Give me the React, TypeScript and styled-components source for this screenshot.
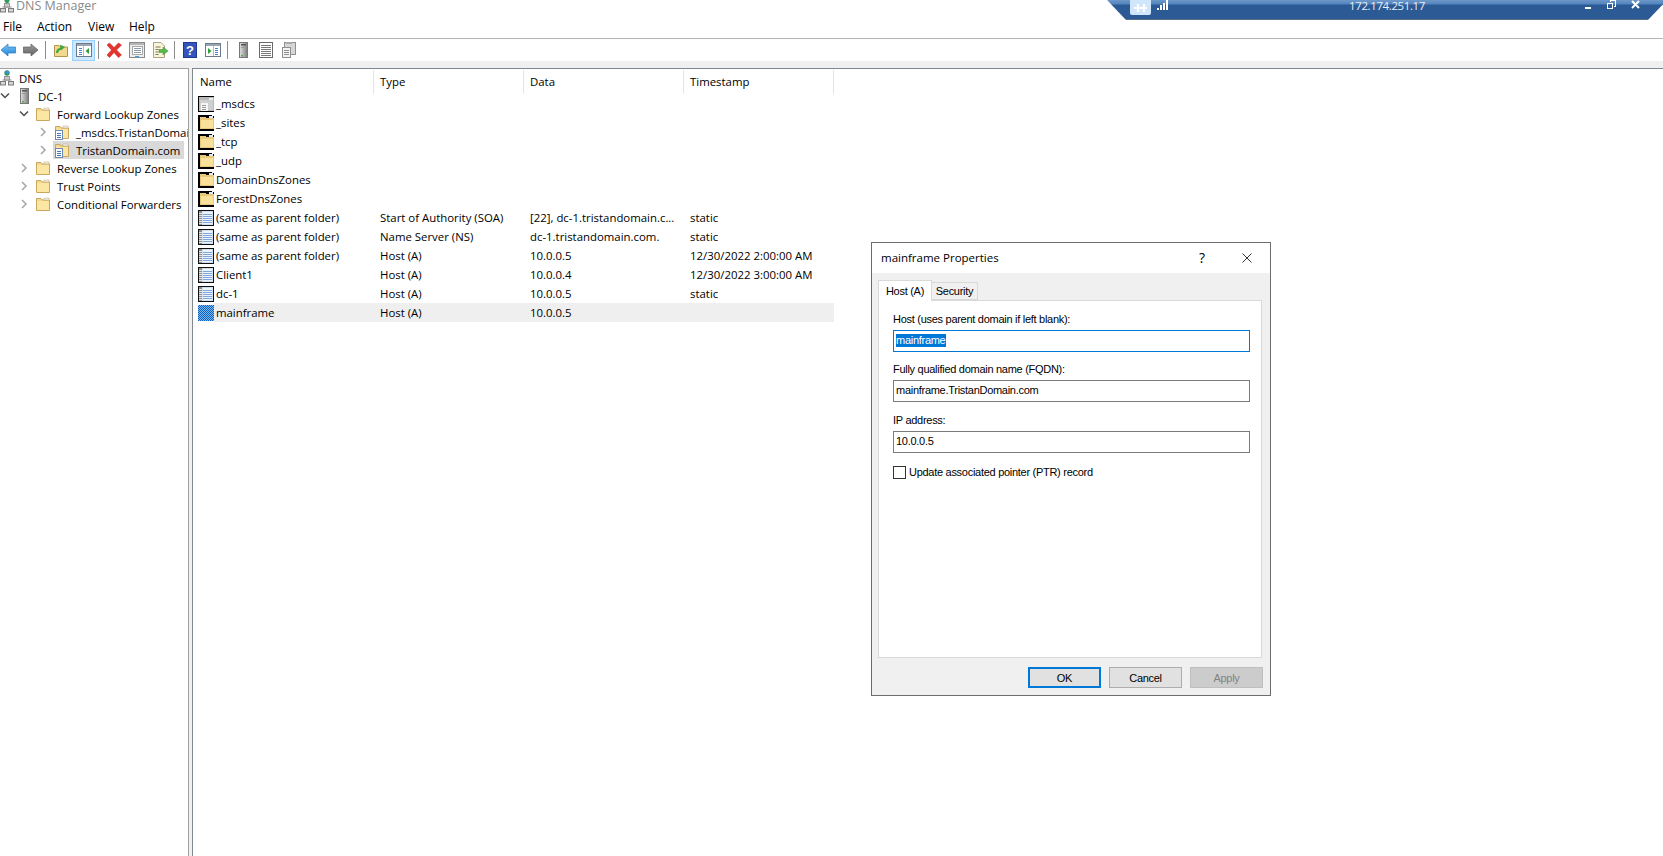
import React from "react";
import styled, { createGlobalStyle } from "styled-components";

const GlobalStyle = createGlobalStyle`
  html, body {
    margin: 0;
    padding: 0;
    height: 100%;
    background: #fff;
    overflow: hidden;
  }
  #root { height: 100%; }
  * { box-sizing: border-box; }
`;

const uiFont = `"Open Sans", "Noto Sans", sans-serif`;
const dlgFont = `"Liberation Sans", Arial, sans-serif`;

const Window = styled.div`
  position: relative;
  display: flex;
  flex-direction: column;
  width: 1663px;
  height: 856px;
  overflow: hidden;
  background: #fff;
  font-family: ${uiFont};
  font-size: 11.4px;
  color: #000;
`;

const TitleRow = styled.div`
  height: 16px;
  display: flex;
  align-items: flex-start;
  overflow: hidden;
  color: #8a8a8a;
  & > svg { margin-top: -3px; flex: none; }
  & > span { margin: -3px 0 0 1px; font-size: 12.5px; line-height: 18px; }
`;

const MenuBar = styled.div`
  height: 23px;
  display: flex;
  align-items: center;
  border-bottom: 1px solid #b4b4b4;
  padding-bottom: 1px;
  font-size: 12px;
`;

const MenuItem = styled.span<{ $w: number }>`
  width: ${p => p.$w}px;
  padding-left: 3px;
`;

const Toolbar = styled.div`
  height: 22px;
  display: flex;
  align-items: center;
  margin-left: -4px;
  flex: none;
`;

const ToolButton = styled.div<{ $active?: boolean }>`
  width: 23px;
  height: 21px;
  display: flex;
  align-items: center;
  justify-content: center;
  background: ${p => (p.$active ? "#cce8ff" : "transparent")};
  border: 1px solid ${p => (p.$active ? "#99d1ff" : "transparent")};
`;

const ToolSep = styled.div`
  width: 7px;
  height: 18px;
  display: flex;
  justify-content: center;
  &::before {
    content: "";
    width: 1px;
    background: #8c8c8c;
  }
`;

const Panes = styled.div`
  flex: 1;
  display: flex;
  gap: 3px;
  padding-top: 7px;
  background: #f0f0f0;
  min-height: 0;
`;

const TreePane = styled.div`
  width: 189px;
  background: #fff;
  border-top: 1px solid #a0a0a0;
  border-right: 1px solid #a0a0a0;
  overflow: hidden;
`;

const TreeRow = styled.div<{ $indent: number }>`
  height: 18px;
  display: flex;
  align-items: center;
  white-space: nowrap;
  padding-left: ${p => p.$indent}px;
`;

const Chevron = styled.div`
  width: 10px;
  height: 18px;
  margin-right: 5px;
  flex: none;
  display: flex;
  align-items: center;
  justify-content: center;
`;

const TreeItem = styled.div<{ $selected?: boolean }>`
  display: flex;
  align-items: center;
  height: 18px;
  padding: 0 4px 0 1px;
  background: ${p => (p.$selected ? "#d9d9d9" : "transparent")};
  & > span { margin-left: 6px; }
`;

const RootItem = styled.div`
  display: flex;
  align-items: center;
  height: 18px;
  & > span { margin-left: 4px; }
`;

const ListPane = styled.div`
  flex: 1;
  background: #fff;
  border-top: 1px solid #808890;
  border-left: 1px solid #808890;
  overflow: hidden;
`;

const HeaderRow = styled.div`
  height: 25px;
  display: flex;
  padding-top: 1px;
`;

const HeaderCell = styled.div<{ $w: number; $pad: number }>`
  width: ${p => p.$w}px;
  padding-left: ${p => p.$pad}px;
  border-right: 1px solid #e5e5e5;
  display: flex;
  align-items: center;
  padding-bottom: 1px;
`;

const Row = styled.div`
  height: 19px;
  display: flex;
  align-items: center;
  padding-left: 5px;
  white-space: nowrap;
`;

const RowCells = styled.div<{ $selected?: boolean }>`
  display: flex;
  align-items: center;
  height: 19px;
  background: ${p => (p.$selected ? "#efefef" : "transparent")};
`;

const Cell = styled.div<{ $w: number; $pad: number }>`
  width: ${p => p.$w}px;
  padding-left: ${p => p.$pad}px;
  overflow: hidden;
`;

/* RDP connection bar over the top of the window */
const ConnectionBar = styled.div`
  position: absolute;
  top: 0;
  left: 1107px;
  width: 560px;
  height: 20px;
  display: flex;
  align-items: flex-start;
  clip-path: polygon(0 0, 100% 0, 541px 100%, 19px 100%);
  background: linear-gradient(#6c98c9 0, #5485bd 4px, #2b5a95 5px, #2b5a95 19px, #5d6f86 19px);
  color: #fff;
  padding-left: 23px;
`;

const PinButton = styled.div`
  width: 21px;
  height: 15px;
  background: #cfe6fb;
  border-radius: 0 0 2px 2px;
  display: flex;
  align-items: center;
  justify-content: center;
  margin-right: 6px;
  flex: none;
`;

const SignalBars = styled.div`
  display: flex;
  align-items: flex-end;
  gap: 1px;
  height: 10px;
  width: 12px;
  flex: none;
`;

const SignalBar = styled.div<{ $h: number }>`
  width: 2px;
  height: ${p => p.$h}px;
  background: #fff;
`;

const HostName = styled.div`
  flex: 1;
  text-align: center;
  font-size: 11.5px;
  letter-spacing: -0.4px;
  line-height: 12px;
  padding-left: 21px;
  color: #e8eef6;
`;

const BarControls = styled.div`
  display: flex;
  align-items: flex-start;
  gap: 15px;
  margin-right: 27px;
  flex: none;
  height: 12px;
`;

/* properties dialog floating over the console */
const Dialog = styled.div`
  position: absolute;
  left: 871px;
  top: 242px;
  width: 400px;
  height: 454px;
  border: 1px solid #6d6d6d;
  background: #f0f0f0;
  display: flex;
  flex-direction: column;
  font-family: ${dlgFont};
  font-size: 11px;
  letter-spacing: -0.28px;
`;

const DialogTitle = styled.div`
  height: 30px;
  background: #fff;
  display: flex;
  align-items: center;
  padding: 0 0 1px 9px;
  font-family: ${uiFont};
  font-size: 11.5px;
  letter-spacing: 0;
  flex: none;
`;

const TitleText = styled.div`
  flex: 1;
`;

const HelpMark = styled.div`
  width: 10px;
  text-align: center;
  font-size: 14px;
  margin-right: 35px;
`;

const CloseMark = styled.div`
  width: 10px;
  height: 10px;
  margin-right: 18px;
  display: flex;
`;

const DialogBody = styled.div`
  flex: 1;
  display: flex;
  flex-direction: column;
  padding: 7px 7px 7px 6px;
  min-height: 0;
`;

const Tabs = styled.div`
  display: flex;
  align-items: flex-end;
  height: 20px;
  flex: none;
`;

const Tab = styled.div<{ $active?: boolean }>`
  position: relative;
  z-index: ${p => (p.$active ? 1 : 0)};
  display: flex;
  align-items: center;
  justify-content: center;
  width: ${p => (p.$active ? 54 : 46)}px;
  height: ${p => (p.$active ? 21 : 18)}px;
  margin-bottom: ${p => (p.$active ? -1 : 0)}px;
  background: ${p => (p.$active ? "#fff" : "#f0f0f0")};
  border: 1px solid #d9d9d9;
  border-bottom: ${p => (p.$active ? "none" : "1px solid #d9d9d9")};
  border-left: ${p => (p.$active ? "1px solid #d9d9d9" : "none")};
`;

const TabPanel = styled.div`
  height: 358px;
  width: 384px;
  flex: none;
  background: #fff;
  border: 1px solid #d9d9d9;
  padding: 11px 11px 0 14px;
  display: flex;
  flex-direction: column;
  gap: 10px;
`;

const FieldGroup = styled.div`
  display: flex;
  flex-direction: column;
  &:nth-child(3) { margin-top: 1px; }
`;

const FieldLabel = styled.div`
  height: 16px;
  line-height: 15px;
  margin-bottom: 2px;
  white-space: nowrap;
`;

const FieldBox = styled.div<{ $focused?: boolean }>`
  height: 22px;
  width: 357px;
  border: 1px solid ${p => (p.$focused ? "#0078d7" : "#7a7a7a")};
  display: flex;
  align-items: center;
  padding: 0 0 2px 2px;
  background: #fff;
`;

const SelectedText = styled.span`
  background: #0078d7;
  color: #fff;
  line-height: 13px;
  padding-right: 1px;
`;

const CheckRow = styled.div`
  display: flex;
  align-items: center;
  height: 13px;
  margin-top: 3px;
  white-space: nowrap;
`;

const CheckLabel = styled.span`
  margin-top: -2px;
`;

const CheckBox = styled.div`
  width: 13px;
  height: 13px;
  border: 1px solid #333;
  background: #fff;
  margin-right: 3px;
  flex: none;
`;

const ButtonRow = styled.div`
  display: flex;
  justify-content: flex-end;
  gap: 8px;
  margin-top: 9px;
  height: 21px;
  flex: none;
`;

const DlgButton = styled.div<{ $kind?: "default" | "disabled" }>`
  width: 73px;
  height: 21px;
  display: flex;
  align-items: center;
  justify-content: center;
  background: ${p => (p.$kind === "disabled" ? "#cccccc" : "#e1e1e1")};
  color: ${p => (p.$kind === "disabled" ? "#838383" : "#000")};
  border: ${p =>
    p.$kind === "default"
      ? "2px solid #0078d7"
      : p.$kind === "disabled"
      ? "1px solid #bfbfbf"
      : "1px solid #adadad"};
`;

/* ---------- icons ---------- */

const ChevronDown = () => (
  <svg width="10" height="8" viewBox="0 0 10 8">
    <path d="M1 1.5 L5 5.5 L9 1.5" fill="none" stroke="#4d4d4d" strokeWidth="1.5" />
  </svg>
);

const ChevronRight = () => (
  <svg width="8" height="10" viewBox="0 0 8 10">
    <path d="M2 1 L6 5 L2 9" fill="none" stroke="#a6a6a6" strokeWidth="1.5" />
  </svg>
);

const FolderShape = () => (
  <>
    <path d="M1.5 2.5 H6 L7 4 H14.5 V14.5 H1.5 Z" fill="#f4d88f" stroke="#c9a85e" />
    <rect x="2" y="5" width="12" height="9" fill="#fbe6a4" />
    <rect x="9" y="2" width="5" height="2" fill="#e9f1f8" stroke="#c9a85e" strokeWidth="0.5" />
  </>
);

const TreeFolder = () => (
  <svg width="16" height="16" viewBox="0 0 16 16">
    <FolderShape />
  </svg>
);

const ZoneFolder = () => (
  <svg width="16" height="16" viewBox="0 0 16 16">
    <FolderShape />
    <rect x="1.5" y="6.5" width="7" height="9" fill="#fff" stroke="#6f87a8" />
    <path d="M3 9.5h4M3 11.5h4M3 13.5h4" stroke="#3f78b8" strokeWidth="1" />
  </svg>
);

const DnsIcon = () => (
  <svg width="15" height="16" viewBox="0 0 15 16">
    <circle cx="7" cy="3" r="2.7" fill="#2f9a5a" />
    <path d="M5 1.5 A2.7 2.7 0 0 1 9.5 2.5 L7 4.5 Z" fill="#3f8fe0" />
    <path d="M7 6 V10 M2.5 10 H11.5" stroke="#8a8a8a" fill="none" />
    <rect x="4.5" y="6.5" width="5" height="3.5" fill="#c9c9c9" stroke="#7a7a7a" strokeWidth="0.7" />
    <rect x="0.5" y="11.5" width="5" height="3.5" fill="#d5d5d5" stroke="#7a7a7a" />
    <rect x="8.5" y="11.5" width="5" height="3.5" fill="#d5d5d5" stroke="#7a7a7a" />
  </svg>
);

const ServerShape = () => (
  <>
    <defs>
      <linearGradient id="srv" x1="0" x2="1" y1="0" y2="0">
        <stop offset="0" stopColor="#e2e2e2" />
        <stop offset="1" stopColor="#7d7d7d" />
      </linearGradient>
    </defs>
    <rect x="4.5" y="0.5" width="8" height="15" fill="url(#srv)" stroke="#777" />
    <rect x="6" y="2" width="5" height="1.5" fill="#555" />
    <rect x="6" y="5" width="5" height="1" fill="#999" />
    <rect x="6" y="13" width="2" height="1.5" fill="#4caf50" />
  </>
);

const ServerIcon = () => (
  <svg width="16" height="16" viewBox="0 0 16 16">
    <ServerShape />
  </svg>
);

const ListFolder = () => (
  <svg width="16" height="16" viewBox="0 0 16 16" shapeRendering="crispEdges">
    <rect width="16" height="16" fill="#000" />
    <rect x="14" width="2" height="1" fill="#fff" />
    <path d="M2 2 H7 L8 3 H16 V14 H2 Z" fill="#e9c878" />
    <rect x="3" y="5" width="12" height="8" fill="#f9e19c" />
    <rect x="11" y="1" width="4" height="2" fill="#dfeaf5" />
  </svg>
);

const ListGrayZone = () => (
  <svg width="16" height="16" viewBox="0 0 16 16" shapeRendering="crispEdges">
    <rect width="16" height="16" fill="#000" />
    <rect x="1" y="1" width="15" height="14" fill="#b9b9b9" />
    <rect x="2" y="4" width="13" height="10" fill="#cfcfcf" />
    <rect x="11" y="2" width="4" height="2" fill="#ececec" />
    <rect x="3" y="7" width="7" height="8" fill="#f7f7f7" />
    <path d="M4 9.5h4M4 11.5h4M4 13.5h4" stroke="#9a9a9a" />
  </svg>
);

const ListRecord = () => (
  <svg width="16" height="16" viewBox="0 0 16 16" shapeRendering="crispEdges">
    <rect width="16" height="16" fill="#111" />
    <rect x="1" y="1" width="14" height="14" fill="#d3dfee" />
    <rect x="1" y="1" width="3" height="14" fill="#8f8f8f" />
    <path d="M1 3h3M1 5h3M1 7h3M1 9h3M1 11h3M1 13h3" stroke="#e4e4e4" />
    <rect x="5" y="2" width="9" height="12" fill="#eef4fb" />
    <path d="M5 4h9M5 6h9M5 8h9M5 10h9M5 12h9" stroke="#7ea6dc" />
  </svg>
);

const ListRecordSelected = () => (
  <svg width="16" height="16" viewBox="0 0 16 16" shapeRendering="crispEdges">
    <defs>
      <pattern id="dither" width="2" height="2" patternUnits="userSpaceOnUse">
        <rect width="2" height="2" fill="#0a62c4" />
        <rect width="1" height="1" fill="#7fb6ef" />
        <rect x="1" y="1" width="1" height="1" fill="#7fb6ef" />
      </pattern>
    </defs>
    <rect width="16" height="16" fill="url(#dither)" />
  </svg>
);

const BackIcon = () => (
  <svg width="16" height="16" viewBox="0 0 16 16">
    <defs>
      <linearGradient id="bk" x1="0" x2="0" y1="0" y2="1">
        <stop offset="0" stopColor="#7cc3f5" />
        <stop offset="1" stopColor="#1e86d8" />
      </linearGradient>
    </defs>
    <path d="M1 8 L8 2 V5 H15.5 V11 H8 V14 Z" fill="url(#bk)" stroke="#2a78bd" strokeWidth="0.7" />
  </svg>
);

const ForwardIcon = () => (
  <svg width="16" height="16" viewBox="0 0 16 16">
    <defs>
      <linearGradient id="fw" x1="0" x2="0" y1="0" y2="1">
        <stop offset="0" stopColor="#a0a0a0" />
        <stop offset="1" stopColor="#606060" />
      </linearGradient>
    </defs>
    <path d="M15 8 L8 2 V5 H0.5 V11 H8 V14 Z" fill="url(#fw)" stroke="#5c5c5c" strokeWidth="0.7" />
  </svg>
);

const UpFolderIcon = () => (
  <svg width="16" height="16" viewBox="0 0 16 16">
    <path d="M1.5 3.5 H6 L7 5 H14.5 V14.5 H1.5 Z" fill="#f3d88f" stroke="#b4954f" />
    <path d="M4 11 C4 7 7 7 9 6" fill="none" stroke="#3fa83f" strokeWidth="2" />
    <path d="M7 2.5 L12 5 L8 8.5 Z" fill="#3fa83f" />
  </svg>
);

const ShowPaneIcon = () => (
  <svg width="16" height="14" viewBox="0 0 16 14" shapeRendering="crispEdges">
    <rect x="0.5" y="0.5" width="15" height="13" fill="#fff" stroke="#6c7b8a" />
    <rect x="1" y="1" width="14" height="2" fill="#9aa6b2" />
    <path d="M3 5h3M3 7h3M3 9h3M3 11h3" stroke="#4a86c5" />
    <path d="M7.5 3v10" stroke="#b5bcc4" />
    <path d="M13 5 L9.5 8 L13 11 Z" fill="#2f9e3a" shapeRendering="auto" />
  </svg>
);

const DeleteIcon = () => (
  <svg width="16" height="16" viewBox="0 0 16 16">
    <path
      d="M1 3 L3.5 1 L8 5.5 L12.5 1 L15.5 3 L10.5 8 L15.5 13 L12.5 15.5 L8 10.5 L3.5 15.5 L1 13 L5.5 8 Z"
      fill="#e5332e"
      stroke="#b8211d"
      strokeWidth="0.5"
    />
  </svg>
);

const PropertiesIcon = () => (
  <svg width="16" height="16" viewBox="0 0 16 16" shapeRendering="crispEdges">
    <rect x="0.5" y="0.5" width="15" height="15" fill="#ededed" stroke="#8a8a8a" />
    <rect x="1" y="1" width="14" height="2" fill="#b5b5b5" />
    <rect x="3" y="4" width="10" height="8" fill="#fff" stroke="#a8a8a8" />
    <path d="M5 6h7M5 8h7M5 10h7" stroke="#8c9aaa" />
    <rect x="6" y="14" width="4" height="1" fill="#3f9fe0" />
  </svg>
);

const ExportIcon = () => (
  <svg width="16" height="16" viewBox="0 0 16 16">
    <path d="M1.5 0.5 H9 L12.5 4 V15.5 H1.5 Z" fill="#fbf5d8" stroke="#a8a38a" />
    <path d="M3.5 5h5M3.5 7.5h3M3.5 10h3M3.5 12.5h3" stroke="#77746a" />
    <path d="M7 7.5 H11 V5 L16 9 L11 13 V10.5 H7 Z" fill="#58b848" stroke="#3b8f33" strokeWidth="0.5" />
  </svg>
);

const HelpIcon = () => (
  <svg width="14" height="16" viewBox="0 0 14 16">
    <rect width="14" height="16" fill="#1f3a96" />
    <rect x="1" y="1" width="12" height="14" fill="#3454b8" />
    <text x="7" y="13" textAnchor="middle" fontFamily="Liberation Sans, sans-serif" fontWeight="700" fontSize="13" fill="#fff">?</text>
  </svg>
);

const ActionPaneIcon = () => (
  <svg width="16" height="14" viewBox="0 0 16 14" shapeRendering="crispEdges">
    <rect x="0.5" y="0.5" width="15" height="13" fill="#fff" stroke="#6c7b8a" />
    <rect x="1" y="1" width="14" height="2" fill="#9aa6b2" />
    <path d="M10 5h3M10 7h3M10 9h3M10 11h3" stroke="#4a86c5" />
    <path d="M8.5 3v10" stroke="#b5bcc4" />
    <path d="M3 5 L6.5 8 L3 11 Z" fill="#2f9e3a" shapeRendering="auto" />
  </svg>
);

const RulesIcon = () => (
  <svg width="16" height="16" viewBox="0 0 16 16" shapeRendering="crispEdges">
    <rect x="1.5" y="0.5" width="13" height="15" fill="#fff" stroke="#6a6a6a" />
    <path d="M3 3h10M3 5h10M3 7h10M3 9h10M3 11h10M3 13h10" stroke="#777" />
  </svg>
);

const CopyIcon = () => (
  <svg width="16" height="16" viewBox="0 0 16 16" shapeRendering="crispEdges">
    <rect x="3.5" y="0.5" width="11" height="12" fill="#d6d6d6" stroke="#8f8f8f" />
    <rect x="5" y="0" width="6" height="2" fill="#a9a9a9" />
    <rect x="1.5" y="5.5" width="8" height="10" fill="#f2f2f2" stroke="#8f8f8f" />
    <path d="M3 8h5M3 10h5M3 12h5" stroke="#8f8f8f" />
  </svg>
);

const TitleIcon = () => (
  <svg width="15" height="16" viewBox="0 0 15 16">
    <path d="M7 4 V10 M2.5 10 H11.5" stroke="#8a8a8a" fill="none" />
    <rect x="4.5" y="6.5" width="5" height="3.5" fill="#c9c9c9" stroke="#7a7a7a" strokeWidth="0.7" />
    <rect x="0.5" y="11.5" width="5" height="3.5" fill="#d5d5d5" stroke="#7a7a7a" />
    <rect x="8.5" y="11.5" width="5" height="3.5" fill="#d5d5d5" stroke="#7a7a7a" />
    <circle cx="7" cy="3.5" r="2.5" fill="#2f9a5a" />
  </svg>
);

const PinIcon = () => (
  <svg width="13" height="10" viewBox="0 0 13 10" shapeRendering="crispEdges">
    <rect x="0" y="4" width="13" height="2" fill="#fff" />
    <rect x="3" y="1" width="2" height="8" fill="#fff" />
    <rect x="9" y="1" width="2" height="8" fill="#fff" />
  </svg>
);

const BarMinimize = () => (
  <svg width="8" height="10" viewBox="0 0 8 10">
    <rect x="1" y="7" width="6" height="2" fill="#fff" />
  </svg>
);

const BarRestore = () => (
  <svg width="9" height="9" viewBox="0 0 9 9" shapeRendering="crispEdges">
    <rect x="0.5" y="3.5" width="5" height="5" fill="none" stroke="#fff" />
    <path d="M3 1.5V0.5H8.5V6H7" fill="none" stroke="#fff" />
  </svg>
);

const BarClose = () => (
  <svg width="9" height="9" viewBox="0 0 9 9">
    <path d="M1 1 L8 8 M8 1 L1 8" stroke="#fff" strokeWidth="2" />
  </svg>
);

/* ---------- data ---------- */

type TreeEntry = {
  label: string;
  indent: number;
  open?: boolean;
  icon: "server" | "folder" | "zone";
  selected?: boolean;
};

const treeEntries: TreeEntry[] = [
  { label: "DC-1", indent: 0, open: true, icon: "server" },
  { label: "Forward Lookup Zones", indent: 19, open: true, icon: "folder" },
  { label: "_msdcs.TristanDomain.com", indent: 38, icon: "zone" },
  { label: "TristanDomain.com", indent: 38, icon: "zone", selected: true },
  { label: "Reverse Lookup Zones", indent: 19, icon: "folder" },
  { label: "Trust Points", indent: 19, icon: "folder" },
  { label: "Conditional Forwarders", indent: 19, icon: "folder" },
];

const treeIcons = { server: ServerIcon, folder: TreeFolder, zone: ZoneFolder };

type ListEntry = {
  name: string;
  type?: string;
  data?: string;
  stamp?: string;
  icon: "folder" | "gray" | "record" | "selected";
};

const listEntries: ListEntry[] = [
  { name: "_msdcs", icon: "gray" },
  { name: "_sites", icon: "folder" },
  { name: "_tcp", icon: "folder" },
  { name: "_udp", icon: "folder" },
  { name: "DomainDnsZones", icon: "folder" },
  { name: "ForestDnsZones", icon: "folder" },
  { name: "(same as parent folder)", type: "Start of Authority (SOA)", data: "[22], dc-1.tristandomain.c...", stamp: "static", icon: "record" },
  { name: "(same as parent folder)", type: "Name Server (NS)", data: "dc-1.tristandomain.com.", stamp: "static", icon: "record" },
  { name: "(same as parent folder)", type: "Host (A)", data: "10.0.0.5", stamp: "12/30/2022 2:00:00 AM", icon: "record" },
  { name: "Client1", type: "Host (A)", data: "10.0.0.4", stamp: "12/30/2022 3:00:00 AM", icon: "record" },
  { name: "dc-1", type: "Host (A)", data: "10.0.0.5", stamp: "static", icon: "record" },
  { name: "mainframe", type: "Host (A)", data: "10.0.0.5", icon: "selected" },
];

const listIcons = { folder: ListFolder, gray: ListGrayZone, record: ListRecord, selected: ListRecordSelected };

export default function App() {
  return (
    <Window>
      <GlobalStyle />
      <TitleRow>
        <TitleIcon />
        <span>DNS Manager</span>
      </TitleRow>
      <MenuBar>
        <MenuItem $w={34}>File</MenuItem>
        <MenuItem $w={51}>Action</MenuItem>
        <MenuItem $w={41}>View</MenuItem>
        <MenuItem $w={40}>Help</MenuItem>
      </MenuBar>
      <Toolbar>
        <ToolButton><BackIcon /></ToolButton>
        <ToolButton><ForwardIcon /></ToolButton>
        <ToolSep />
        <ToolButton><UpFolderIcon /></ToolButton>
        <ToolButton $active><ShowPaneIcon /></ToolButton>
        <ToolSep />
        <ToolButton><DeleteIcon /></ToolButton>
        <ToolButton><PropertiesIcon /></ToolButton>
        <ToolButton><ExportIcon /></ToolButton>
        <ToolSep />
        <ToolButton><HelpIcon /></ToolButton>
        <ToolButton><ActionPaneIcon /></ToolButton>
        <ToolSep />
        <ToolButton><ServerIcon /></ToolButton>
        <ToolButton><RulesIcon /></ToolButton>
        <ToolButton><CopyIcon /></ToolButton>
      </Toolbar>
      <Panes>
        <TreePane>
          <TreeRow $indent={0}>
            <RootItem>
              <DnsIcon />
              <span>DNS</span>
            </RootItem>
          </TreeRow>
          {treeEntries.map(entry => {
            const Icon = treeIcons[entry.icon];
            return (
              <TreeRow key={entry.label} $indent={entry.indent}>
                <Chevron>{entry.open ? <ChevronDown /> : <ChevronRight />}</Chevron>
                <TreeItem $selected={entry.selected}>
                  <Icon />
                  <span>{entry.label}</span>
                </TreeItem>
              </TreeRow>
            );
          })}
        </TreePane>
        <ListPane>
          <HeaderRow>
            <HeaderCell $w={181} $pad={7}>Name</HeaderCell>
            <HeaderCell $w={150} $pad={6}>Type</HeaderCell>
            <HeaderCell $w={160} $pad={6}>Data</HeaderCell>
            <HeaderCell $w={150} $pad={6}>Timestamp</HeaderCell>
          </HeaderRow>
          {listEntries.map((entry, i) => {
            const Icon = listIcons[entry.icon];
            return (
              <Row key={i}>
                <Icon />
                <RowCells $selected={entry.icon === "selected"}>
                  <Cell $w={160} $pad={2}>{entry.name}</Cell>
                  <Cell $w={150} $pad={6}>{entry.type}</Cell>
                  <Cell $w={160} $pad={6}>{entry.data}</Cell>
                  <Cell $w={150} $pad={6}>{entry.stamp}</Cell>
                </RowCells>
              </Row>
            );
          })}
        </ListPane>
      </Panes>

      <ConnectionBar>
        <PinButton><PinIcon /></PinButton>
        <SignalBars>
          <SignalBar $h={2} />
          <SignalBar $h={5} />
          <SignalBar $h={7} />
          <SignalBar $h={10} />
        </SignalBars>
        <HostName>172.174.251.17</HostName>
        <BarControls>
          <BarMinimize />
          <BarRestore />
          <BarClose />
        </BarControls>
      </ConnectionBar>

      <Dialog>
        <DialogTitle>
          <TitleText>mainframe Properties</TitleText>
          <HelpMark>?</HelpMark>
          <CloseMark>
            <svg width="10" height="10" viewBox="0 0 10 10">
              <path d="M0.5 0.5 L9.5 9.5 M9.5 0.5 L0.5 9.5" stroke="#333" strokeWidth="1" />
            </svg>
          </CloseMark>
        </DialogTitle>
        <DialogBody>
          <Tabs>
            <Tab $active>Host (A)</Tab>
            <Tab>Security</Tab>
          </Tabs>
          <TabPanel>
            <FieldGroup>
              <FieldLabel>Host (uses parent domain if left blank):</FieldLabel>
              <FieldBox $focused><SelectedText>mainframe</SelectedText></FieldBox>
            </FieldGroup>
            <FieldGroup>
              <FieldLabel>Fully qualified domain name (FQDN):</FieldLabel>
              <FieldBox>mainframe.TristanDomain.com</FieldBox>
            </FieldGroup>
            <FieldGroup>
              <FieldLabel>IP address:</FieldLabel>
              <FieldBox>10.0.0.5</FieldBox>
            </FieldGroup>
            <CheckRow>
              <CheckBox />
              <CheckLabel>Update associated pointer (PTR) record</CheckLabel>
            </CheckRow>
          </TabPanel>
          <ButtonRow>
            <DlgButton $kind="default">OK</DlgButton>
            <DlgButton>Cancel</DlgButton>
            <DlgButton $kind="disabled">Apply</DlgButton>
          </ButtonRow>
        </DialogBody>
      </Dialog>
    </Window>
  );
}
